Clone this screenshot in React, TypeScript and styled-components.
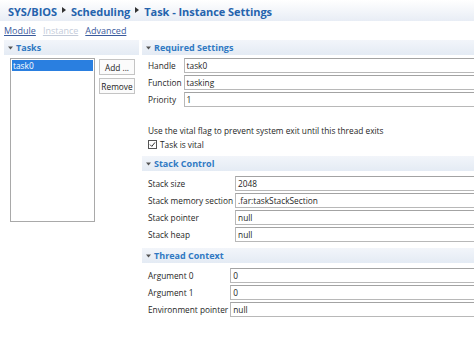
import * as React from "react";
import styled, { createGlobalStyle } from "styled-components";

const GlobalStyle = createGlobalStyle`
  html, body {
    margin: 0;
    padding: 0;
    background: #ffffff;
    overflow: hidden;
  }
  body {
    font-family: "Open Sans", "Noto Sans", "DejaVu Sans", sans-serif;
    color: #1e1e1e;
  }
`;

const Page = styled.div`
  width: 474px;
  height: 337px;
  overflow: hidden;
  background: #fff;
`;

const TitleBar = styled.div`
  height: 21px;
  box-sizing: border-box;
  display: flex;
  align-items: center;
  gap: 5px;
  padding: 2px 0 0 8px;
  background: linear-gradient(#ffffff, #e8edf5);
  font-size: 11px;
  font-weight: 700;
  color: #2563ad;
  white-space: nowrap;
`;

const Crumb = styled.span`
  letter-spacing: -0.05px;
`;

const TabRow = styled.div`
  height: 18px;
  display: flex;
  align-items: center;
  gap: 7px;
  padding-left: 4px;
  font-size: 9px;
`;

const TabLink = styled.span<{ $disabled?: boolean }>`
  color: ${(p) => (p.$disabled ? "#c3cbd9" : "#3a5a9c")};
  text-decoration: underline;
  text-underline-offset: 1px;
`;

const Body = styled.div`
  display: grid;
  grid-template-columns: 135px 540px;
  gap: 3px;
  padding: 1px 0 0 4px;
`;

const Section = styled.div`
  display: flex;
  flex-direction: column;
`;

const SectionHeader = styled.div`
  height: 15px;
  display: flex;
  align-items: center;
  gap: 3px;
  padding-left: 4px;
  background: linear-gradient(#f2f5fa, #e4ebf4);
  font-size: 9px;
  font-weight: 700;
  color: #3079c3;
`;

const LeftContent = styled.div`
  display: flex;
  gap: 4px;
  padding: 3px 0 0 6px;
`;

const ListBox = styled.div`
  width: 81px;
  height: 160px;
  border: 1px solid #a9a9a9;
  padding: 1px;
`;

const ListItem = styled.div<{ $selected?: boolean }>`
  height: 11px;
  line-height: 11px;
  padding-left: 1px;
  font-size: 8.3px;
  background: ${(p) => (p.$selected ? "#2a7fe0" : "transparent")};
  color: ${(p) => (p.$selected ? "#fff" : "#1e1e1e")};
`;

const ButtonColumn = styled.div`
  display: flex;
  flex-direction: column;
  gap: 3px;
  padding-top: 1px;
`;

const Button = styled.div`
  width: 34px;
  height: 14px;
  display: flex;
  align-items: center;
  justify-content: center;
  border: 1px solid #c4c4c4;
  background: #fbfbfb;
  font-size: 8.3px;
  color: #222;
`;

const FormGrid = styled.div<{ $top: number }>`
  display: grid;
  grid-template-columns: auto 1fr;
  column-gap: 2px;
  row-gap: 2px;
  padding: ${(p) => p.$top}px 0 0 6px;
  align-items: center;
`;

const Label = styled.span`
  font-size: 8.3px;
  white-space: nowrap;
  color: #262626;
`;

const Field = styled.div`
  height: 13px;
  display: flex;
  align-items: center;
  padding-left: 2px;
  border: 1px solid #b8b8b8;
  border-top-color: #a3a3a3;
  font-size: 8.3px;
  color: #1e1e1e;
  background: #fff;
`;

const Note = styled.div`
  padding: 18px 0 0 6px;
  font-size: 8.3px;
  color: #262626;
`;

const CheckRow = styled.div`
  display: flex;
  align-items: center;
  gap: 3px;
  padding: 3px 0 6px 6px;
  font-size: 8.3px;
  color: #262626;
`;

const Spacer = styled.div<{ $h: number }>`
  height: ${(p) => p.$h}px;
`;

const Chevron = () => (
  <svg width="5" height="4" viewBox="0 0 5 4">
    <path d="M0 0.5 L5 0.5 L2.5 3.5 Z" fill="#555" />
  </svg>
);

const CrumbArrow = () => (
  <svg width="4" height="6" viewBox="0 0 4 6" style={{ marginTop: -4 }}>
    <path d="M0 0 L4 3 L0 6 Z" fill="#333" />
  </svg>
);

const CheckIcon = () => (
  <svg width="9" height="9" viewBox="0 0 9 9">
    <rect x="0.5" y="0.5" width="8" height="8" fill="#fff" stroke="#555" />
    <path d="M2 4.6 L3.8 6.4 L7 2.4" fill="none" stroke="#333" strokeWidth="1" />
  </svg>
);

const required = [
  ["Handle", "task0"],
  ["Function", "tasking"],
  ["Priority", "1"],
];

const stack = [
  ["Stack size", "2048"],
  ["Stack memory section", ".far:taskStackSection"],
  ["Stack pointer", "null"],
  ["Stack heap", "null"],
];

const thread = [
  ["Argument 0", "0"],
  ["Argument 1", "0"],
  ["Environment pointer", "null"],
];

const Form = ({ rows, top }: { rows: string[][]; top: number }) => (
  <FormGrid $top={top}>
    {rows.map(([label, value]) => (
      <React.Fragment key={label}>
        <Label>{label}</Label>
        <Field>{value}</Field>
      </React.Fragment>
    ))}
  </FormGrid>
);

export default function App() {
  return (
    <Page>
      <GlobalStyle />
      <TitleBar>
        <Crumb>SYS/BIOS</Crumb>
        <CrumbArrow />
        <Crumb>Scheduling</Crumb>
        <CrumbArrow />
        <Crumb>Task - Instance Settings</Crumb>
      </TitleBar>
      <TabRow>
        <TabLink>Module</TabLink>
        <TabLink $disabled>Instance</TabLink>
        <TabLink>Advanced</TabLink>
      </TabRow>
      <Body>
        <Section>
          <SectionHeader>
            <Chevron />
            Tasks
          </SectionHeader>
          <LeftContent>
            <ListBox>
              <ListItem $selected>task0</ListItem>
            </ListBox>
            <ButtonColumn>
              <Button>Add ...</Button>
              <Button>Remove</Button>
            </ButtonColumn>
          </LeftContent>
        </Section>
        <Section>
          <SectionHeader>
            <Chevron />
            Required Settings
          </SectionHeader>
          <Form rows={required} top={3} />
          <Note>Use the vital flag to prevent system exit until this thread exits</Note>
          <CheckRow>
            <CheckIcon />
            Task is vital
          </CheckRow>
          <SectionHeader>
            <Chevron />
            Stack Control
          </SectionHeader>
          <Form rows={stack} top={5} />
          <Spacer $h={6} />
          <SectionHeader>
            <Chevron />
            Thread Context
          </SectionHeader>
          <Form rows={thread} top={5} />
        </Section>
      </Body>
    </Page>
  );
}
